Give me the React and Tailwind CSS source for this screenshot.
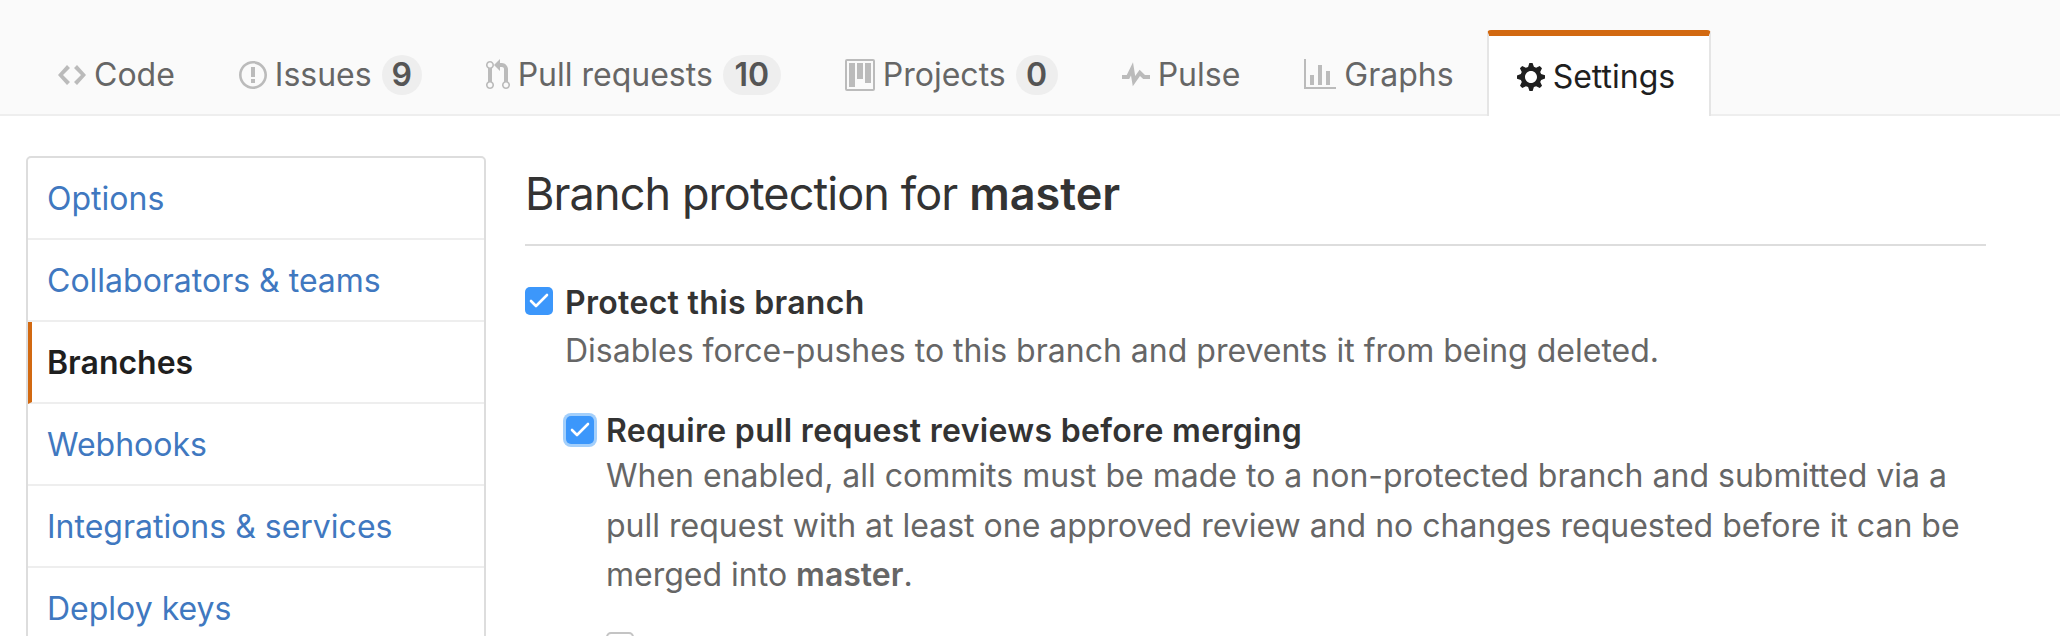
import { Check } from "lucide-react";

function Octicon({ w, h = 16, size, d, className }) {
    return (
        <svg viewBox={`0 0 ${w} ${h}`} width={size * (w / h)} height={size} fill="currentColor" className={className}>
            <path fillRule="evenodd" d={d} />
        </svg>
    );
}

const icons = {
    code: { w: 14, d: "M9.5 3L8 4.5 11.5 8 8 11.5 9.5 13 14 8 9.5 3zm-5 0L0 8l4.5 5L6 11.5 2.5 8 6 4.5 4.5 3z" },
    issue: { w: 14, d: "M7 2.3c3.14 0 5.7 2.56 5.7 5.7s-2.56 5.7-5.7 5.7A5.71 5.71 0 0 1 1.3 8c0-3.14 2.56-5.7 5.7-5.7zM7 1C3.14 1 0 4.14 0 8s3.14 7 7 7 7-3.14 7-7-3.14-7-7-7zm1 3H6v5h2V4zm0 6H6v2h2v-2z" },
    pull: { w: 12, d: "M11 11.28V5c-.03-.78-.34-1.47-.94-2.06C9.46 2.35 8.78 2.03 8 2H7V0L4 3l3 3V4h1c.27.02.48.11.69.31.21.2.3.42.31.69v6.28A1.993 1.993 0 0 0 10 15a1.993 1.993 0 0 0 1-3.72zm-1 2.92c-.66 0-1.2-.55-1.2-1.2 0-.65.55-1.2 1.2-1.2.65 0 1.2.55 1.2 1.2 0 .65-.55 1.2-1.2 1.2zM4 3c0-1.11-.89-2-2-2a1.993 1.993 0 0 0-1 3.72v6.56A1.993 1.993 0 0 0 2 15a1.993 1.993 0 0 0 1-3.72V4.72c.59-.34 1-.98 1-1.72zm-.8 10c0 .66-.55 1.2-1.2 1.2-.65 0-1.2-.55-1.2-1.2 0-.65.55-1.2 1.2-1.2.65 0 1.2.55 1.2 1.2zM2 4.2C1.34 4.2.8 3.65.8 3c0-.65.55-1.2 1.2-1.2.65 0 1.2.55 1.2 1.2 0 .65-.55 1.2-1.2 1.2z" },
    project: { w: 15, d: "M10 12h3V2h-3v10zm-4-2h3V2H6v8zm-4 4h3V2H2v12zm-1 1h13V1H1v14zM14 0H1a1 1 0 0 0-1 1v14a1 1 0 0 0 1 1h13a1 1 0 0 0 1-1V1a1 1 0 0 0-1-1z" },
    pulse: { w: 14, d: "M11.5 8L8.8 5.4 6.6 8.5 5.5 1.6 2.38 8H0v2h3.6l.9-1.8.9 5.4L9 8.5l1.6 1.5H14V8z" },
    graph: { w: 16, d: "M16 14v1H0V0h1v14h15zM5 13H3V8h2v5zm4 0H7V3h2v10zm4 0h-2V6h2v7z" },
    gear: { w: 14, d: "M14 8.77v-1.6l-1.94-.64-.45-1.09.88-1.84-1.13-1.13-1.81.91-1.09-.45-.69-1.92h-1.6l-.63 1.94-1.11.45-1.84-.88-1.13 1.13.91 1.81-.45 1.09L0 7.23v1.59l1.94.64.45 1.09-.88 1.84 1.13 1.13 1.81-.91 1.09.45.69 1.92h1.59l.63-1.94 1.11-.45 1.84.88 1.13-1.13-.92-1.81.47-1.09L14 8.75v.02zM7 11c-1.66 0-3-1.34-3-3s1.34-3 3-3 3 1.34 3 3-1.34 3-3 3z" },
};

const tabs = [
    { label: "Code", icon: "code" },
    { label: "Issues", icon: "issue", count: 9, badge: "w-[40px]" },
    { label: "Pull requests", icon: "pull", count: 10, badge: "w-[58px]" },
    { label: "Projects", icon: "project", count: 0, badge: "w-[42px]" },
    { label: "Pulse", icon: "pulse" },
    { label: "Graphs", icon: "graph" },
];

const menu = ["Options", "Collaborators & teams", "Branches", "Webhooks", "Integrations & services", "Deploy keys"];

function Tab({ label, icon, count, badge }) {
    return (
        <a className="flex h-[85px] items-center px-[32px] pt-[6px] text-[#666666]">
            <Octicon {...icons[icon]} size={32} className="mr-[8px] text-[#bbbbbb]" />
            <span>{label}</span>
            {count !== undefined && (
                <span className={`ml-[10px] flex h-[40px] items-center justify-center rounded-full bg-[#eeeeee] font-semibold text-[#555555] ${badge}`}>
                    {count}
                </span>
            )}
        </a>
    );
}

function Box({ focused }) {
    return (
        <span className={`flex size-[28px] shrink-0 items-center justify-center rounded-[5px] bg-[#3c97fb] text-white ${focused ? "ring-[3px] ring-[#a3cffb]" : ""}`}>
            <Check size={24} strokeWidth={2.6} />
        </span>
    );
}

export default function App() {
    return (
        <div className="h-[636px] overflow-hidden bg-white font-['Inter',sans-serif] text-[32px] text-[#333333]">
            {/* tabs */}
            <div className="flex h-[116px] items-end border-b-2 border-[#eeeeee] bg-[#fafafa] pl-[26px]">
                {tabs.map((t) => (
                    <Tab key={t.label} {...t} />
                ))}
                <a className="-mb-[2px] ml-[1px] flex h-[86px] w-[224px] items-center rounded-t-[4px] border-x-2 border-t-[6px] border-x-[#e5e5e5] border-t-[#d26911] bg-white pl-[28px] pt-[1px] text-[#1f1f1f]">
                    <Octicon {...icons.gear} size={32} className="mr-[8px]" />
                    Settings
                </a>
            </div>

            <div className="flex items-start pl-[26px] pt-[40px]">
                {/* sidebar */}
                <div className="w-[460px] shrink-0 rounded-[5px] border-2 border-[#dddddd]">
                    {menu.map((item) => (
                        <div
                            key={item}
                            className={`flex h-[82px] items-center border-b-2 border-[#eeeeee] pt-[2px] ${item === "Branches" ? "border-l-4 border-l-[#d26911] pl-[15px] font-semibold text-[#1f1f1f]" : "pl-[19px] text-[#4078c0]"}`}
                        >
                            {item}
                        </div>
                    ))}
                </div>

                {/* main */}
                <div className="ml-[39px] w-[1461px]">
                    <h1 className="border-b-2 border-[#dddddd] pb-[18px] pt-[5px] text-[45px] leading-[65px] tracking-[-0.02em]">
                        Branch protection for <strong className="font-semibold tracking-normal">master</strong>
                    </h1>
                    <div className="mt-[33px] flex gap-[12px]">
                        <span className="mt-[8px]"><Box /></span>
                        <div className="leading-[48px]">
                            <div className="font-semibold tracking-[0.01em]">Protect this branch</div>
                            <div className="text-[#666666]">Disables force-pushes to this branch and prevents it from being deleted.</div>
                        </div>
                    </div>
                    <div className="ml-[41px] mt-[35px] flex gap-[12px]">
                        <span className="mt-[6px]"><Box focused /></span>
                        <div>
                            <div className="font-semibold leading-[41px] tracking-[0.01em]">Require pull request reviews before merging</div>
                            <div className="leading-[49.5px] text-[#666666]">
                                When enabled, all commits must be made to a non-protected branch and submitted via a pull request with at least one approved review and no changes requested before it can be merged into <strong className="font-semibold">master</strong>.
                            </div>
                            <span className="mt-[32px] block size-[28px] rounded-[5px] border-2 border-[#c4c4c4] bg-white" />
                        </div>
                    </div>
                </div>
            </div>
        </div>
    );
}
